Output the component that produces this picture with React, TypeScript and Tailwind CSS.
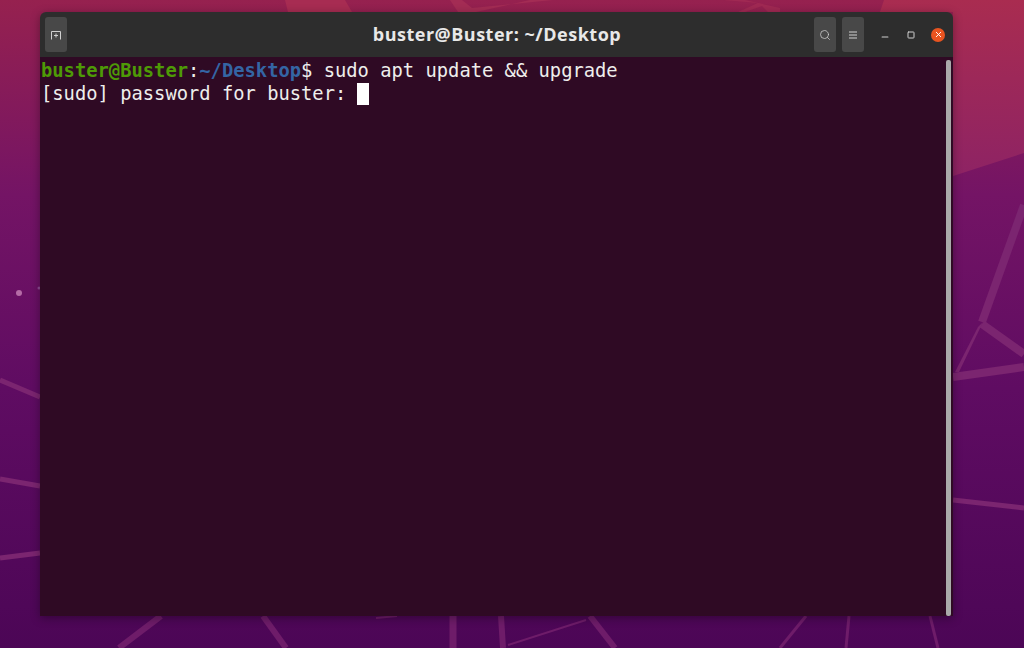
import { Minus, Search, Square, X } from 'lucide-react'

function Wallpaper() {
  return (
    <svg className="absolute inset-0" width="1024" height="648" viewBox="0 0 1024 648">
      <defs>
        <linearGradient id="bg" x1="0" y1="0" x2="0" y2="1">
          <stop offset="0" stopColor="#96214f" />
          <stop offset="0.3" stopColor="#741465" />
          <stop offset="0.6" stopColor="#5f0c62" />
          <stop offset="1" stopColor="#4c0656" />
        </linearGradient>
        <linearGradient id="light" x1="0" y1="0" x2="0" y2="1">
          <stop offset="0" stopColor="#a92c50" />
          <stop offset="1" stopColor="#8e2364" />
        </linearGradient>
      </defs>
      <rect width="1024" height="648" fill="url(#bg)" />
      <polygon points="884,0 1024,0 1024,153 953,176 953,12 880,12" fill="url(#light)" />
      <polygon points="285,0 345,0 352,12 288,12" fill="#a72c52" />
      <polygon points="450,0 462,0 472,8 553,0 530,0 476,12 458,12" fill="#a32c54" />
      <polygon points="723,0 745,0 780,8 780,12 768,12 762,6 745,12 738,12 758,3" fill="#a32c54" opacity="0.8" />
      <g fill="none" stroke="#7b2570" strokeWidth="5">
        <path d="M0 380 L40 397" />
        <path d="M0 479 L40 486" />
        <path d="M0 558 L40 553" />
        <path d="M1024 205 L982 322" strokeWidth="8" />
        <path d="M982 324 L1024 354" strokeWidth="8" />
        <path d="M953 377 L1024 367" strokeWidth="8" />
        <path d="M953 500 L1024 508" strokeWidth="5" />
        <path d="M161 616 L119 648" stroke="#6e1c69" strokeWidth="6" />
        <path d="M263 616 L286 648" stroke="#6e1c69" strokeWidth="6" />
        <path d="M453 616 L453 648" stroke="#6e1c69" strokeWidth="7" />
        <path d="M501 616 L503 648" stroke="#6e1c69" strokeWidth="6" />
        <path d="M508 645 L586 620" stroke="#6e1c69" strokeWidth="2" />
        <path d="M376 618 L397 616" stroke="#6e1c69" strokeWidth="2" />
        <path d="M590 616 L615 648" stroke="#6e1c69" strokeWidth="6" />
        <path d="M806 616 L780 648" stroke="#6e1c69" strokeWidth="3" />
        <path d="M849 616 L846 648" stroke="#6e1c69" strokeWidth="3" />
        <path d="M930 616 L938 648" stroke="#6e1c69" strokeWidth="3" />
      </g>
      <polygon points="983,322 978,327 955,372 959,372" fill="#7b2570" />
      <circle cx="19" cy="293" r="3" fill="#b56ba6" />
      <circle cx="39" cy="288" r="1.5" fill="#8d4a92" />
    </svg>
  )
}

function HeaderButton({ children }: { children: React.ReactNode }) {
  return (
    <div className="w-[22px] h-[35px] rounded-[3px] bg-[#484848] flex items-center justify-center text-[#d0d0d0]">
      {children}
    </div>
  )
}

export default function App() {
  return (
    <div className="relative w-[1024px] h-[648px] overflow-hidden pt-[12px] pl-[40px]">
      <Wallpaper />
      <div className="relative w-[913px] h-[604px] flex flex-col rounded-t-[6px] overflow-hidden shadow-[0_2px_10px_rgba(0,0,0,0.35)]">
        <header className="h-[45px] shrink-0 bg-[#2d2d2d] flex items-center pl-[5px] pr-[8px]">
          <HeaderButton>
            <svg width="12" height="12" viewBox="0 0 12 12" fill="none" stroke="currentColor" strokeWidth="1">
              <path d="M1.5 10.5 V2.5 H10.5 V10.5" />
              <path d="M6 4.5 V8.5 M4 6.5 H8" />
            </svg>
          </HeaderButton>
          <h1 className="flex-1 text-center text-[#e8e8e8] text-[18px] tracking-[0.5px] font-bold font-['Open_Sans',sans-serif] pl-[113px]">
            buster@Buster: ~/Desktop
          </h1>
          <div className="flex items-center gap-[6px]">
            <HeaderButton>
              <Search size={12} strokeWidth={1.5} />
            </HeaderButton>
            <HeaderButton>
              <svg width="10" height="10" viewBox="0 0 10 10" stroke="currentColor" strokeWidth="1">
                <path d="M1 2 H9 M1 5 H9 M1 8 H9" />
              </svg>
            </HeaderButton>
          </div>
          <div className="flex items-center ml-[16px] gap-[16.5px] text-[#d0d0d0]">
            <Minus size={10} strokeWidth={2.5} className="translate-y-[2px]" />
            <Square size={8} strokeWidth={3} />
            <div className="w-[14px] h-[14px] rounded-full bg-[#e95420] flex items-center justify-center text-white">
              <X size={9} strokeWidth={2.5} />
            </div>
          </div>
        </header>
        <main className="relative flex-1 bg-[#2f0a24] pl-[1px] pt-[2px] text-[18.8px] leading-[23px] font-['DejaVu_Sans_Mono',monospace] text-[#eeeeec]">
          <div>
            <span className="font-bold text-[#4e9a06]">buster@Buster</span>
            :<span className="font-bold text-[#3465a4]">~/Desktop</span>$ sudo apt update &amp;&amp; upgrade
          </div>
          <div className="flex items-center">
            <span className="whitespace-pre">[sudo] password for buster: </span>
            <span className="-ml-px w-[12px] h-[22px] bg-white" />
          </div>
          <div className="absolute top-[3px] bottom-0 right-[2px] w-[5px] rounded-[2px] bg-[#aaaaaa]" />
        </main>
      </div>
    </div>
  )
}
